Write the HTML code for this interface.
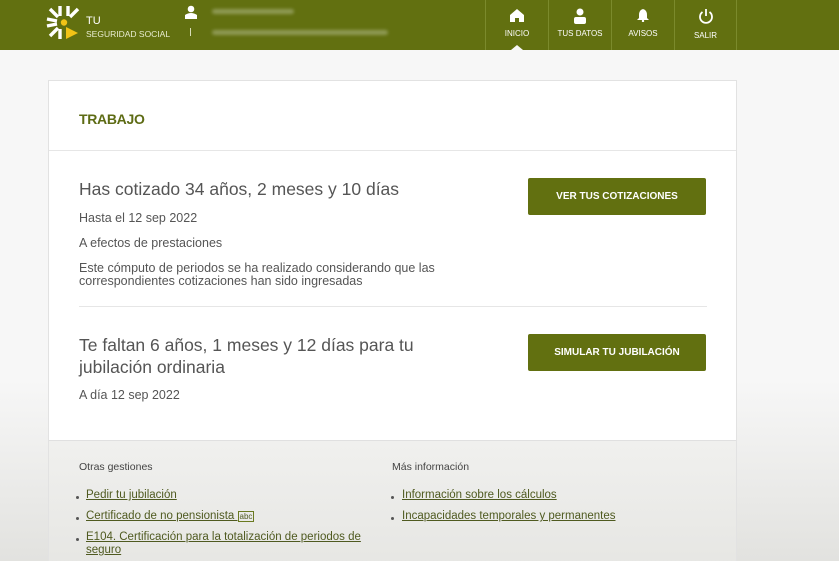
<!DOCTYPE html>
<html><head><meta charset="utf-8"><style>
*{margin:0;padding:0;box-sizing:border-box}
html,body{width:839px;height:561px;overflow:hidden}
body{font-family:"Liberation Sans",sans-serif;background:linear-gradient(#f7f7f7 0,#f7f7f7 380px,#e2e2df 561px);position:relative}
.hdr{position:absolute;left:0;top:0;width:839px;height:50px;background:#627010}
.a{position:absolute}
.nav{position:absolute;top:0;height:50px;width:63px;border-left:1px solid #7b8a2c;color:#fff;font-size:8px;text-align:center}
.nav .l{position:absolute;left:0;right:0;top:29px}
.card{position:absolute;left:48px;top:80px;width:689px;height:481px;background:#fff;border:1px solid #e2e2e2;border-bottom:0;overflow:hidden}
.t{position:absolute;color:#555;font-size:12.5px}
.btn{position:absolute;left:479px;width:178px;height:37px;background:#627010;color:#fff;font-size:10px;font-weight:bold;text-align:center;line-height:37px;border-radius:2px}
.foot{position:absolute;left:0;top:359px;width:687px;height:130px;background:linear-gradient(#f0f0ee,#e6e6e3);border-top:1px solid #e0e0e0}
.lk{position:absolute;color:#4f5a20;font-size:11.5px;text-decoration:underline}
.dot{position:absolute;width:3px;height:3px;background:#555;border-radius:50%}
</style></head><body>
<div class="hdr">
<svg class="a" style="left:46px;top:4px" width="36" height="36" viewBox="0 0 36 36">
<g stroke="#fff" stroke-width="3.4" fill="none">
<path d="M14 2 L14 12"/><path d="M22 2 L22 12"/><path d="M4 5 L12 13"/><path d="M32 5 L24 13"/>
<path d="M1 15 L11 17"/><path d="M1 22 L11 20"/><path d="M4 32 L12 24"/><path d="M14 25 L14 35"/></g>
<circle cx="18" cy="18.5" r="3.2" fill="#f2c316"/><path d="M20 23 L20 35 L32 29 Z" fill="#f2c316"/></svg>
<div class="a" style="left:86px;top:15px;color:#fff;font-size:11px">TU</div>
<div class="a" style="left:86px;top:29px;color:#e8ecd0;font-size:8.5px">SEGURIDAD SOCIAL</div>
<svg class="a" style="left:185px;top:5px" width="12" height="14" viewBox="0 0 12 14"><circle cx="6" cy="4" r="3.3" fill="#fff"/><path d="M0 14 L0 10 Q6 6 12 10 L12 14Z" fill="#fff"/></svg>
<div class="a" style="left:190px;top:28px;width:1px;height:8px;background:#d8dcb8"></div>
<div class="a" style="left:212px;top:9px;width:82px;height:5px;background:#8f9a55;border-radius:3px;filter:blur(1.5px)"></div>
<div class="a" style="left:212px;top:30px;width:176px;height:5px;background:#8f9a55;border-radius:3px;filter:blur(1.5px)"></div>
<div class="nav" style="left:485px"><svg class="a" style="left:24px;top:9px" width="14" height="13" viewBox="0 0 14 13"><path d="M7 0 L14 6 L14 13 L9 13 L9 9 L5 9 L5 13 L0 13 L0 6Z" fill="#fff"/></svg><div class="l">INICIO</div>
<div class="a" style="left:25px;top:45px;width:0;height:0;border:6px solid transparent;border-bottom:5px solid #f7f7f7;border-top:0"></div></div>
<div class="nav" style="left:548px"><svg class="a" style="left:25px;top:8px" width="12" height="16" viewBox="0 0 12 16"><circle cx="6" cy="4" r="3.5" fill="#fff"/><rect x="0" y="9" width="12" height="7" rx="2" fill="#fff"/></svg><div class="l">TUS DATOS</div></div>
<div class="nav" style="left:611px"><svg class="a" style="left:25px;top:9px" width="12" height="13" viewBox="0 0 12 13"><path d="M6 0 Q10 1 10 6 L10 9 L12 11 L0 11 L2 9 L2 6 Q2 1 6 0Z" fill="#fff"/><circle cx="6" cy="12" r="1.2" fill="#fff"/></svg><div class="l">AVISOS</div></div>
<div class="nav" style="left:674px;border-right:1px solid #7b8a2c"><svg class="a" style="left:23px;top:8px" width="16" height="16" viewBox="0 0 16 16"><path d="M4.5 4 A6 6 0 1 0 11.5 4" stroke="#fff" stroke-width="1.8" fill="none"/><path d="M8 1 L8 8" stroke="#fff" stroke-width="1.8"/></svg><div class="l" style="top:31px">SALIR</div></div>
</div>
<div class="card">
<div class="a" style="left:30px;top:30px;color:#5d6b14;font-size:14px;font-weight:bold;letter-spacing:-0.3px">TRABAJO</div>
<div class="a" style="left:0;top:69px;width:687px;height:1px;background:#e6e6e6"></div>
<div class="t" style="left:30px;top:98px;font-size:17.5px">Has cotizado 34 años, 2 meses y 10 días</div>
<div class="t" style="left:30px;top:130px">Hasta el 12 sep 2022</div>
<div class="t" style="left:30px;top:155px">A efectos de prestaciones</div>
<div class="t" style="left:30px;top:181px;line-height:13px">Este cómputo de periodos se ha realizado considerando que las<br>correspondientes cotizaciones han sido ingresadas</div>
<div class="btn" style="top:97px">VER TUS COTIZACIONES</div>
<div class="a" style="left:30px;top:225px;width:628px;height:1px;background:#e6e6e6"></div>
<div class="t" style="left:30px;top:253px;font-size:17.5px;line-height:22px">Te faltan 6 años, 1 meses y 12 días para tu<br>jubilación ordinaria</div>
<div class="t" style="left:30px;top:307px">A día 12 sep 2022</div>
<div class="btn" style="top:253px">SIMULAR TU JUBILACIÓN</div>
<div class="foot">
<div class="a" style="left:30px;top:20px;font-size:10.5px;color:#444">Otras gestiones</div>
<div class="a" style="left:343px;top:20px;font-size:10.5px;color:#444">Más información</div>
<div class="dot" style="left:27px;top:55px"></div><div class="lk" style="left:37px;top:48px">Pedir tu jubilación</div>
<div class="dot" style="left:27px;top:76px"></div><div class="lk" style="left:37px;top:69px">Certificado de no pensionista <span style="font-size:8px;border:1px solid #6a7a20;text-decoration:none;display:inline-block;line-height:9px;padding:0 1px">abc</span></div>
<div class="dot" style="left:27px;top:97px"></div><div class="lk" style="left:37px;top:90px;line-height:13px">E104. Certificación para la totalización de periodos de<br>seguro</div>
<div class="dot" style="left:342px;top:55px"></div><div class="lk" style="left:353px;top:48px">Información sobre los cálculos</div>
<div class="dot" style="left:342px;top:76px"></div><div class="lk" style="left:353px;top:69px">Incapacidades temporales y permanentes</div>
</div>
</div>
</body></html>
